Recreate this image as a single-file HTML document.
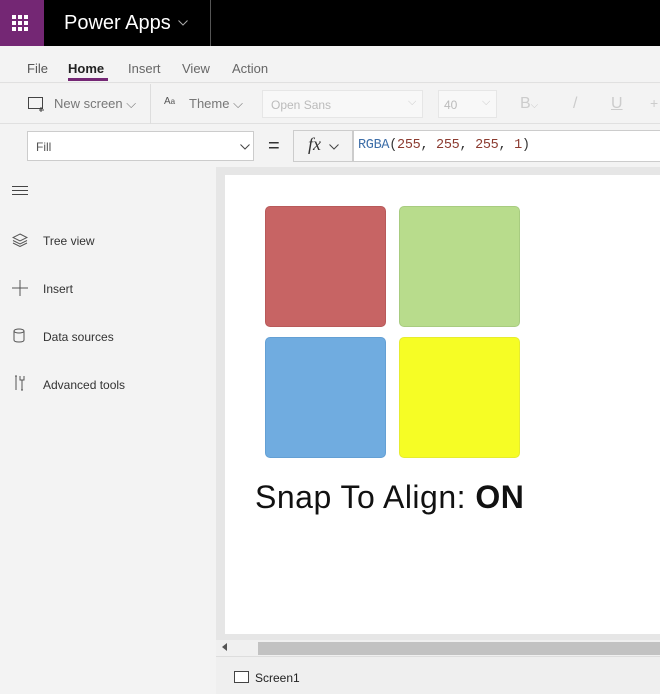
<!DOCTYPE html>
<html><head><style>
*{margin:0;padding:0;box-sizing:border-box}
body{width:660px;height:694px;overflow:hidden;position:relative;background:#f3f2f1;font-family:"Liberation Sans",sans-serif;color:#333}
.a{position:absolute}
</style></head><body>
<div class="a" style="left:0;top:0;width:660px;height:46px;background:#000"></div>
<div class="a" style="left:0;top:0;width:44px;height:46px;background:#742774"></div>
<svg class="a" style="left:12px;top:15px" width="16" height="16" fill="#fff">
<rect x="0" y="0" width="4" height="4"/><rect x="6" y="0" width="4" height="4"/><rect x="12" y="0" width="4" height="4"/>
<rect x="0" y="6" width="4" height="4"/><rect x="6" y="6" width="4" height="4"/><rect x="12" y="6" width="4" height="4"/>
<rect x="0" y="12" width="4" height="4"/><rect x="6" y="12" width="4" height="4"/><rect x="12" y="12" width="4" height="4"/></svg>
<div class="a" style="left:64px;top:12px;color:#fff;font-size:20px">Power Apps</div>
<svg class="a" style="left:178px;top:20px" width="10" height="6"><path d="M0.5 0.5 L5 5 L9.5 0.5" stroke="#aaa" fill="none"/></svg>
<div class="a" style="left:210px;top:0;width:1px;height:46px;background:#555"></div>
<div class="a" style="left:0;top:46px;width:660px;height:37px;background:#f3f3f3;border-bottom:1px solid #e0e0e0"></div>
<div class="a" style="left:27px;top:61px;font-size:13px;color:#555">File</div>
<div class="a" style="left:68px;top:61px;font-size:13px;font-weight:bold;color:#222">Home</div>
<div class="a" style="left:68px;top:78px;width:40px;height:3px;background:#742774"></div>
<div class="a" style="left:128px;top:61px;font-size:13px;color:#666">Insert</div>
<div class="a" style="left:182px;top:61px;font-size:13px;color:#666">View</div>
<div class="a" style="left:232px;top:61px;font-size:13px;color:#666">Action</div>
<div class="a" style="left:0;top:84px;width:660px;height:40px;background:#f3f3f3;border-bottom:1px solid #e0e0e0"></div>
<svg class="a" style="left:28px;top:97px" width="17" height="15"><rect x="0.5" y="0.5" width="14" height="11" fill="none" stroke="#444"/><path d="M13 10v5M11 13h5" stroke="#444"/></svg>
<div class="a" style="left:54px;top:96px;font-size:13px;color:#777">New screen ⌵</div>
<div class="a" style="left:150px;top:84px;width:1px;height:40px;background:#ddd"></div>
<div class="a" style="left:164px;top:96px;font-size:10px;color:#555">A<span style="font-size:8px">a</span></div>
<div class="a" style="left:189px;top:96px;font-size:13px;color:#777">Theme ⌵</div>
<div class="a" style="left:262px;top:90px;width:161px;height:28px;background:#f8f8f8;border:1px solid #e6e6e6"></div>
<div class="a" style="left:271px;top:98px;font-size:12px;color:#bbb">Open Sans</div>
<div class="a" style="left:408px;top:96px;font-size:11px;color:#ccc">⌵</div>
<div class="a" style="left:438px;top:90px;width:59px;height:28px;background:#f8f8f8;border:1px solid #e6e6e6"></div>
<div class="a" style="left:444px;top:98px;font-size:12px;color:#bbb">40</div>
<div class="a" style="left:482px;top:96px;font-size:11px;color:#ccc">⌵</div>
<div class="a" style="left:520px;top:95px;font-size:16px;color:#ccc">B<span style="font-size:10px">⌵</span></div>
<div class="a" style="left:573px;top:95px;font-size:16px;color:#ccc">/</div>
<div class="a" style="left:611px;top:95px;font-size:16px;color:#ccc;text-decoration:underline">U</div>
<div class="a" style="left:650px;top:95px;font-size:14px;color:#ccc">+</div>
<div class="a" style="left:0;top:124px;width:660px;height:43px;background:#f3f3f3"></div>
<div class="a" style="left:27px;top:131px;width:227px;height:30px;background:#fff;border:1px solid #ccc"></div>
<div class="a" style="left:36px;top:140px;font-size:12px;color:#555">Fill</div>
<svg class="a" style="left:240px;top:144px" width="10" height="6"><path d="M0.5 0.5 L5 5 L9.5 0.5" stroke="#444" fill="none"/></svg>
<div class="a" style="left:268px;top:135px;font-size:20px;color:#333">=</div>
<div class="a" style="left:293px;top:130px;width:60px;height:32px;background:#f3f3f3;border:1px solid #ccc"></div>
<div class="a" style="left:308px;top:134px;font-size:18px;font-style:italic;font-family:'Liberation Serif',serif;color:#333">fx</div>
<svg class="a" style="left:329px;top:144px" width="10" height="6"><path d="M0.5 0.5 L5 5 L9.5 0.5" stroke="#444" fill="none"/></svg>
<div class="a" style="left:353px;top:130px;width:310px;height:32px;background:#fff;border:1px solid #ccc"></div>
<div class="a" style="left:358px;top:138px;font-size:13.5px;font-family:'Liberation Mono',monospace;color:#8b3a2f;letter-spacing:-0.3px"><span style="color:#3d6ea8">RGBA</span><span style="color:#333">(</span>255<span style="color:#333">, </span>255<span style="color:#333">, </span>255<span style="color:#333">, </span>1<span style="color:#333">)</span></div>
<div class="a" style="left:0;top:167px;width:216px;height:527px;background:#f3f3f3"></div>
<div class="a" style="left:12px;top:186px;width:16px;height:1px;background:#444;box-shadow:0 4px 0 #444,0 8px 0 #444"></div>
<svg class="a" style="left:12px;top:233px" width="16" height="14" fill="none" stroke="#555"><path d="M8 1 L15 4.5 L8 8 L1 4.5Z M1 7.5 L8 11 L15 7.5 M1 10 L8 13.5 L15 10"/></svg>
<div class="a" style="left:43px;top:234px;font-size:12px;color:#333">Tree view</div>
<svg class="a" style="left:12px;top:280px" width="16" height="16" stroke="#555"><path d="M8 0v16M0 8h16"/></svg>
<div class="a" style="left:43px;top:282px;font-size:12px;color:#333">Insert</div>
<svg class="a" style="left:13px;top:328px" width="12" height="15" fill="none" stroke="#555"><ellipse cx="6" cy="3" rx="5" ry="2"/><path d="M1 3v9c0 1.2 2 2 5 2s5-.8 5-2V3"/></svg>
<div class="a" style="left:43px;top:330px;font-size:12px;color:#333">Data sources</div>
<svg class="a" style="left:13px;top:375px" width="12" height="16" fill="none" stroke="#555"><path d="M3 1v14M2 1h2M9 5v10M7 1v4h4V1M8 15h2"/></svg>
<div class="a" style="left:43px;top:378px;font-size:12px;color:#333">Advanced tools</div>
<div class="a" style="left:216px;top:167px;width:444px;height:473px;background:#e6e6e6"></div>
<div class="a" style="left:225px;top:175px;width:435px;height:459px;background:#fff"></div>
<div class="a" style="left:265px;top:206px;width:121px;height:121px;background:#c76464;border-radius:5px;border:1px solid #b85a5a"></div>
<div class="a" style="left:399px;top:206px;width:121px;height:121px;background:#b8dc8c;border-radius:5px;border:1px solid #a8cc80"></div>
<div class="a" style="left:265px;top:337px;width:121px;height:121px;background:#70ace0;border-radius:5px;border:1px solid #64a0d4"></div>
<div class="a" style="left:399px;top:337px;width:121px;height:121px;background:#f6fd25;border-radius:5px;border:1px solid #e6ec30"></div>
<div class="a" style="left:255px;top:479px;font-size:32px;color:#111;letter-spacing:0.5px;white-space:nowrap">Snap To Align: <b>ON</b></div>
<div class="a" style="left:216px;top:640px;width:444px;height:16px;background:#f0f0f0"></div>
<div class="a" style="left:258px;top:642px;width:402px;height:13px;background:#c2c2c2"></div>
<div class="a" style="left:222px;top:643px;width:0;height:0;border-top:4px solid transparent;border-bottom:4px solid transparent;border-right:5px solid #555"></div>
<div class="a" style="left:216px;top:656px;width:444px;height:38px;background:#efefef;border-top:1px solid #ddd"></div>
<div class="a" style="left:234px;top:671px;width:15px;height:12px;border:1px solid #444;background:#fff"></div>
<div class="a" style="left:255px;top:671px;font-size:12px;color:#222">Screen1</div>
</body></html>
